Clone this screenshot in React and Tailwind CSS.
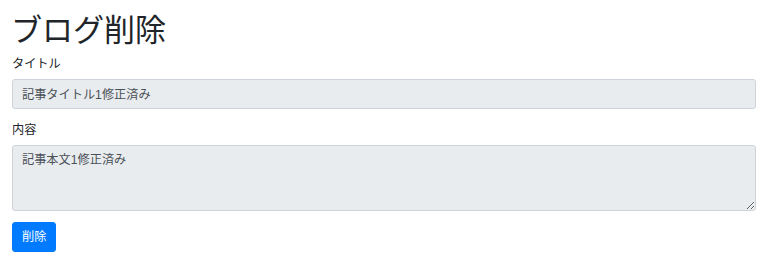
import React from "react";

export default function App() {
  const font = { fontFamily: '"Liberation Sans", "Noto Sans CJK JP", sans-serif' };
  return (
    <div className="w-[768px] h-[267px] bg-white px-[12px] pt-[13px]" style={font}>
      <h1 className="text-[31px] leading-[36px] font-normal text-[#212529] mb-[6px] -ml-[1px]">ブログ削除</h1>
      <div className="mb-[12px]">
        <label className="block text-[12.2px] leading-[18px] text-[#212529] mb-[6px]">タイトル</label>
        <input
          readOnly
          value="記事タイトル1修正済み"
          className="block w-full h-[30px] px-[9px] py-[4.5px] text-[12.2px] leading-[18px] text-[#495057] bg-[#e9ecef] border border-[#ced4da] rounded-[3px] outline-none"
          style={font}
        />
      </div>
      <div className="mb-[11px]">
        <label className="block text-[12.2px] leading-[18px] text-[#212529] mb-[6px]">内容</label>
        <textarea
          readOnly
          rows={3}
          value="記事本文1修正済み"
          className="block w-full h-[66px] px-[9px] py-[4.5px] text-[12.2px] leading-[18px] text-[#495057] bg-[#e9ecef] border border-[#ced4da] rounded-[3px] outline-none"
          style={font}
        />
      </div>
      <button
        className="h-[30px] px-[9px] text-[12.2px] leading-[18px] text-white bg-[#007bff] border border-[#007bff] rounded-[3px]"
        style={font}
      >
        削除
      </button>
    </div>
  );
}
